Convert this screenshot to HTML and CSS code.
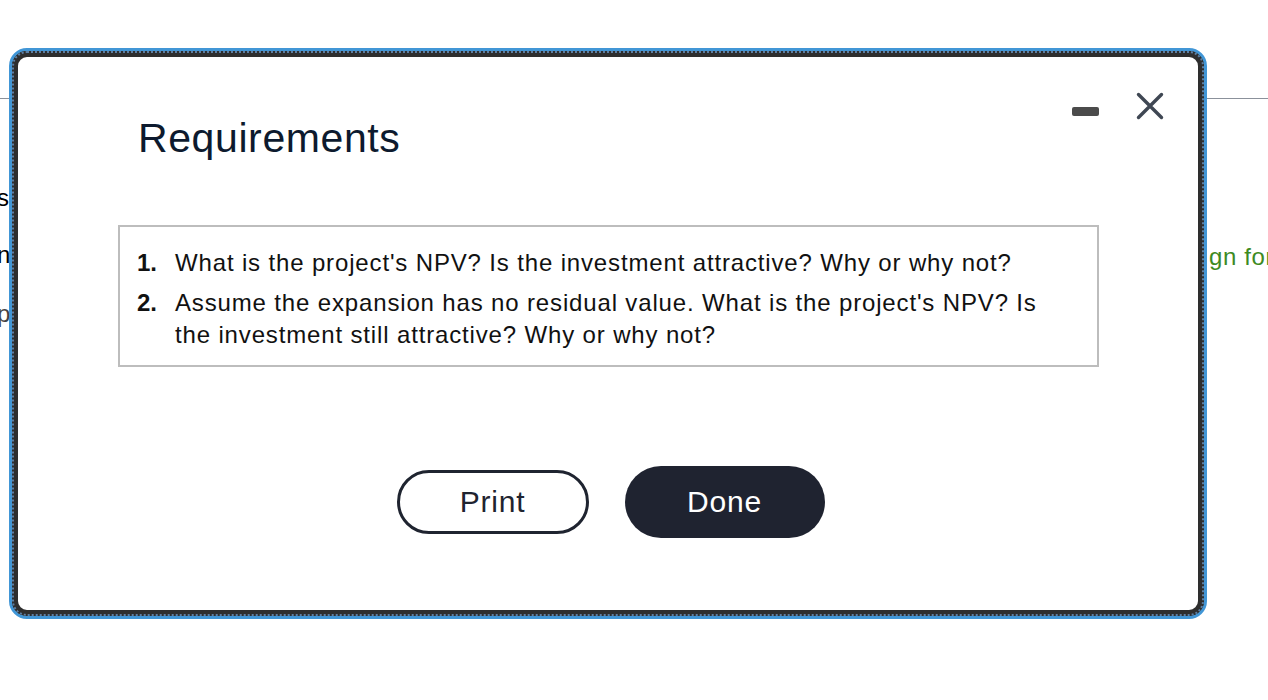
FILE: index.html
```html
<!DOCTYPE html>
<html lang="en">
<head>
<meta charset="utf-8">
<title>Requirements</title>
<link rel="stylesheet" href="styles.css">
</head>
<body>
<div class="page">
  <div class="bg">
    <div class="bg-rule"></div>
    <div class="bg-row">
      <div class="bg-left">
        <div class="bg-line">s</div>
        <div class="bg-line">n</div>
        <div class="bg-line muted">p</div>
      </div>
      <div class="bg-right">
        <div class="bg-link">gn for</div>
      </div>
    </div>
  </div>

  <div class="dialog-frame" role="dialog" aria-labelledby="dlg-title">
    <div class="dialog">
      <div class="dialog-header">
        <h1 class="dialog-title" id="dlg-title">Requirements</h1>
        <div class="dialog-controls">
          <button class="ctrl ctrl-min" aria-label="Minimize"><span class="min-bar"></span></button>
          <button class="ctrl ctrl-close" aria-label="Close">
            <svg width="28" height="28" viewBox="0 0 28 28" aria-hidden="true">
              <path d="M2.5 2.5 L25.5 25.5 M25.5 2.5 L2.5 25.5" stroke="#3f4753" stroke-width="3.4" stroke-linecap="round" fill="none"/>
            </svg>
          </button>
        </div>
      </div>
      <div class="dialog-body">
        <ol class="req-list">
          <li class="req-item"><span class="req-num">1.</span><span class="req-text">What is the project's NPV? Is the investment attractive? Why or why not?</span></li>
          <li class="req-item"><span class="req-num">2.</span><span class="req-text">Assume the expansion has no residual value. What is the project's NPV? Is the investment still attractive? Why or why not?</span></li>
        </ol>
        <div class="dialog-actions">
          <button class="btn btn-outline">Print</button>
          <button class="btn btn-solid">Done</button>
        </div>
      </div>
    </div>
  </div>
</div>
</body>
</html>
```

FILE: styles.css
```css
html, body {
  margin: 0;
  padding: 0;
  background: #ffffff;
}

body {
  font-family: "Liberation Sans", Arial, Helvetica, sans-serif;
  color: #000;
}

.page {
  position: relative;
  width: 1268px;
  height: 700px;
  overflow: hidden;
}

/* ---------- background page ---------- */
.bg {
  padding-top: 98px;
}

.bg-rule {
  height: 1px;
  background: #8b919b;
}

.bg-row {
  display: flex;
  justify-content: space-between;
}

.bg-left {
  display: flex;
  flex-direction: column;
  margin-left: -3px;
  padding-top: 86px;
  font-size: 24px;
}

.bg-line {
  height: 26px;
  line-height: 26px;
}

.bg-line + .bg-line {
  margin-top: 31px;
}

.bg-line.muted {
  margin-top: 33px;
  color: #444;
}

.bg-right {
  width: 59px;
  overflow: hidden;
  padding-top: 145px;
  font-size: 24px;
  letter-spacing: 0.6px;
}

.bg-link {
  line-height: 26px;
  white-space: nowrap;
  color: #3d8a22;
}

/* ---------- dialog ---------- */
.dialog-frame {
  position: absolute;
  left: 9px;
  top: 48px;
  width: 1198px;
  height: 571px;
  box-sizing: border-box;
  border: 3px solid #4196d6;
  border-radius: 18px;
  background: #2f2f2f;
}

.dialog {
  position: relative;
  box-sizing: border-box;
  height: 100%;
  border: 6px solid #2e2e2e;
  border-radius: 15px;
  background: #ffffff;
}

.dialog::before {
  content: "";
  position: absolute;
  top: -6px;
  left: -6px;
  right: -6px;
  bottom: -6px;
  border: 2px dotted #5e7fa3;
  border-radius: 15px;
  pointer-events: none;
}

.dialog-header {
  display: flex;
  align-items: flex-start;
  padding: 35px 34px 0 120px;
}

.dialog-title {
  margin: 22px 0 0 0;
  font-size: 41px;
  line-height: 48px;
  font-weight: 400;
  color: #0d1a2e;
  letter-spacing: 0.6px;
}

.dialog-controls {
  margin-left: auto;
  display: flex;
  align-items: flex-start;
  gap: 37px;
}

.ctrl {
  border: 0;
  padding: 0;
  margin: 0;
  background: transparent;
  display: block;
}

.ctrl-min {
  margin-top: 15px;
  width: 27px;
  height: 9px;
}

.min-bar {
  display: block;
  width: 27px;
  height: 9px;
  border-radius: 2px;
  background: #4b4b4b;
}

.ctrl-close {
  width: 28px;
  height: 28px;
}

.ctrl-close svg {
  display: block;
}

.dialog-body {
  padding: 63px 99px 0 100px;
}

.req-list {
  list-style: none;
  margin: 0;
  padding: 20px 40px 14px 17px;
  border: 2px solid #bdbdbd;
  font-size: 24px;
  line-height: 32px;
  letter-spacing: 0.85px;
  color: #111;
}

.req-item {
  display: flex;
}

.req-item + .req-item {
  margin-top: 8px;
}

.req-num {
  flex: 0 0 38px;
  font-weight: 700;
  letter-spacing: 0;
}

.req-text {
  flex: 1 1 auto;
}

.dialog-actions {
  display: flex;
  justify-content: center;
  align-items: center;
  gap: 36px;
  margin-top: 99px;
  margin-left: 4px;
}

.btn {
  font-family: "Liberation Sans", Arial, Helvetica, sans-serif;
  font-size: 30px;
  letter-spacing: 0.8px;
  box-sizing: border-box;
  border-radius: 40px;
  cursor: pointer;
}

.btn-outline {
  width: 192px;
  height: 64px;
  border: 3px solid #1f2430;
  background: #ffffff;
  color: #1f2430;
}

.btn-solid {
  width: 200px;
  height: 72px;
  border: 0;
  background: #1f2330;
  color: #ffffff;
}
```
